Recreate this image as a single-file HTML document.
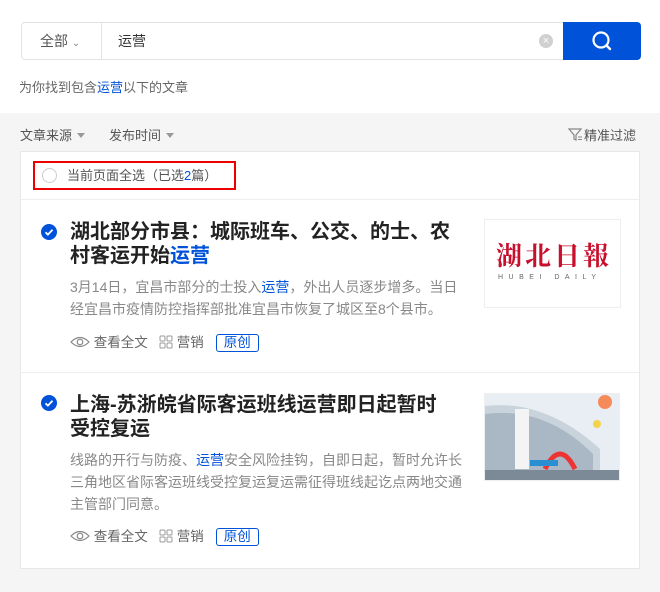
<!DOCTYPE html>
<html><head><meta charset="utf-8"><style>
*{margin:0;padding:0;box-sizing:border-box}
body{width:660px;height:592px;background:#f5f5f5;font-family:"Liberation Sans","Noto Sans CJK SC",sans-serif;position:relative;overflow:hidden;color:#333}
.top{position:absolute;left:0;top:0;width:660px;height:113px;background:#fff}
.search{position:absolute;left:21px;top:22px;width:619px;height:38px;border:1px solid #e3e3e3;border-radius:4px;background:#fff}
.sel{position:absolute;left:0;top:0;width:80px;height:36px;border-right:1px solid #e3e3e3;font-size:14px;color:#555;line-height:36px;padding-left:18px}
.q{position:absolute;left:96px;top:0;line-height:36px;font-size:14px;color:#333}
.clr{position:absolute;left:517px;top:11px;width:14px;height:14px;border-radius:50%;background:#d0d0d0;color:#fff;font-size:11px;line-height:14px;text-align:center}
.btn{position:absolute;left:541px;top:-1px;width:78px;height:38px;background:#0052d9;border-radius:0 4px 4px 0}
.hint{position:absolute;left:19px;top:77px;font-size:13px;color:#666}
.blue{color:#0052d9}
.filters{position:absolute;top:125px;font-size:13px;color:#555}
.tri{display:inline-block;width:0;height:0;border-left:4px solid transparent;border-right:4px solid transparent;border-top:5px solid #999;margin-left:5px;vertical-align:2px}
.card{position:absolute;left:20px;top:151px;width:620px;height:418px;background:#fff;border:1px solid #e8e8e8}
.selall{position:absolute;left:12px;top:9px;width:203px;height:29px;border:2px solid #e00;font-size:13px;color:#555;line-height:25px;padding-left:32px}
.selall i{position:absolute;left:7px;top:5px;width:15px;height:15px;border:1px solid #ccc;border-radius:50%}
.item{position:absolute;left:0;width:618px;border-top:1px solid #eee}
.chk{position:absolute;left:20px;width:16px;height:16px;border-radius:50%;background:#0052d9}
.title{position:absolute;left:49px;width:386px;font-size:20px;font-weight:bold;line-height:24px;color:#222}
.sum{position:absolute;left:49px;width:394px;font-size:14px;line-height:22px;color:#888}
.act{position:absolute;left:49px;font-size:13.5px;color:#666;height:20px;line-height:20px}
.act span{display:inline-block;vertical-align:middle}
.tag{display:inline-block;border:1px solid #0052d9;color:#0052d9;border-radius:3px;padding:0 7px;line-height:16px;font-size:13.5px;margin-left:12px}
.img{position:absolute;left:463px;border:1px solid #eee;background:#fff}
</style></head><body>
<div class="top">
 <div class="search">
  <div class="sel">全部 <span style="font-size:10px;color:#888">&#8964;</span></div>
  <div class="q">运营</div>
  <div class="clr">×</div>
  <div class="btn"><svg width="78" height="38"><circle cx="38" cy="18" r="7.5" fill="none" stroke="#fff" stroke-width="2.2"/><line x1="43.5" y1="23.5" x2="47" y2="27" stroke="#fff" stroke-width="2.4" stroke-linecap="round"/></svg></div>
 </div>
 <div class="hint">为你找到包含<span class="blue">运营</span>以下的文章</div>
</div>
<div class="filters" style="left:20px">文章来源<span class="tri"></span></div>
<div class="filters" style="left:109px">发布时间<span class="tri"></span></div>
<div class="filters" style="left:568px;white-space:nowrap"><svg width="16" height="14" style="vertical-align:-2px"><path d="M1 1h12l-5 6v5l-2-1V7z" fill="none" stroke="#888" stroke-width="1.2"/><path d="M10 9h4M10 11.5h4" stroke="#888"/></svg>精准过滤</div>
<div class="card">
 <div class="selall"><i></i>当前页面全选（已选<span class="blue">2</span>篇）</div>
 <div class="item" style="top:47px;height:173px">
  <div class="chk" style="top:24px"><svg width="16" height="16"><path d="M4.5 8.3l2.4 2.3 4.6-4.8" fill="none" stroke="#fff" stroke-width="1.8"/></svg></div>
  <div class="title" style="top:20px">湖北部分市县：城际班车、公交、的士、农村客运开始<span class="blue">运营</span></div>
  <div class="sum" style="top:76px">3月14日，宜昌市部分的士投入<span class="blue">运营</span>，外出人员逐步增多。当日经宜昌市疫情防控指挥部批准宜昌市恢复了城区至8个县市。</div>
  <div class="act" style="top:133px"><span><svg width="20" height="14" style="vertical-align:-2px"><path d="M1 7Q10-2 19 7Q10 16 1 7z" fill="none" stroke="#888" stroke-width="1.2"/><circle cx="10" cy="7" r="2.8" fill="none" stroke="#888" stroke-width="1.2"/></svg></span> 查看全文 &nbsp; <span><svg width="14" height="14" style="vertical-align:-2px"><g fill="none" stroke="#999"><rect x="1" y="1" width="5" height="5" rx="1"/><rect x="8" y="1" width="5" height="5" rx="1"/><rect x="1" y="8" width="5" height="5" rx="1"/><rect x="8" y="8" width="5" height="5" rx="1"/></g></svg></span> 营销<span class="tag">原创</span></div>
  <div class="img" style="top:19px;width:137px;height:89px;overflow:hidden">
   <div style="position:absolute;left:11px;top:20px;font-family:'Noto Serif CJK SC',serif;font-size:26px;line-height:30px;color:#c8102e;letter-spacing:3px;font-weight:bold;white-space:nowrap">湖北日報</div>
   <div style="position:absolute;left:13px;top:54px;font-size:7px;letter-spacing:5.5px;color:#666;white-space:nowrap">HUBEI DAILY</div>
  </div>
 </div>
 <div class="item" style="top:220px;height:197px">
  <div class="chk" style="top:22px"><svg width="16" height="16"><path d="M4.5 8.3l2.4 2.3 4.6-4.8" fill="none" stroke="#fff" stroke-width="1.8"/></svg></div>
  <div class="title" style="top:20px">上海-苏浙皖省际客运班线运营即日起暂时受控复运</div>
  <div class="sum" style="top:76px">线路的开行与防疫、<span class="blue">运营</span>安全风险挂钩，自即日起，暂时允许长三角地区省际客运班线受控复运复运需征得班线起讫点两地交通主管部门同意。</div>
  <div class="act" style="top:154px"><span><svg width="20" height="14" style="vertical-align:-2px"><path d="M1 7Q10-2 19 7Q10 16 1 7z" fill="none" stroke="#888" stroke-width="1.2"/><circle cx="10" cy="7" r="2.8" fill="none" stroke="#888" stroke-width="1.2"/></svg></span> 查看全文 &nbsp; <span><svg width="14" height="14" style="vertical-align:-2px"><g fill="none" stroke="#999"><rect x="1" y="1" width="5" height="5" rx="1"/><rect x="8" y="1" width="5" height="5" rx="1"/><rect x="1" y="8" width="5" height="5" rx="1"/><rect x="8" y="8" width="5" height="5" rx="1"/></g></svg></span> 营销<span class="tag">原创</span></div>
  <div class="img" style="top:20px;width:136px;height:88px;overflow:hidden">
   <svg width="136" height="88"><rect width="136" height="88" fill="#e8eef4"/><path d="M0 12Q60 5 115 55L115 88H0z" fill="#c9d3dc"/><path d="M0 20Q60 12 108 60L108 88H0z" fill="#a9b8c4"/><rect x="30" y="15" width="14" height="60" fill="#f4f4f4"/><path d="M60 75Q75 45 90 75" fill="none" stroke="#e33" stroke-width="5"/><circle cx="120" cy="8" r="7" fill="#f58a5a"/><circle cx="112" cy="30" r="4" fill="#f2d34a"/><rect x="0" y="76" width="136" height="12" fill="#7b8a96"/><rect x="45" y="66" width="28" height="6" fill="#2a8fd0"/></svg>
  </div>
 </div>
</div>
</body></html>
